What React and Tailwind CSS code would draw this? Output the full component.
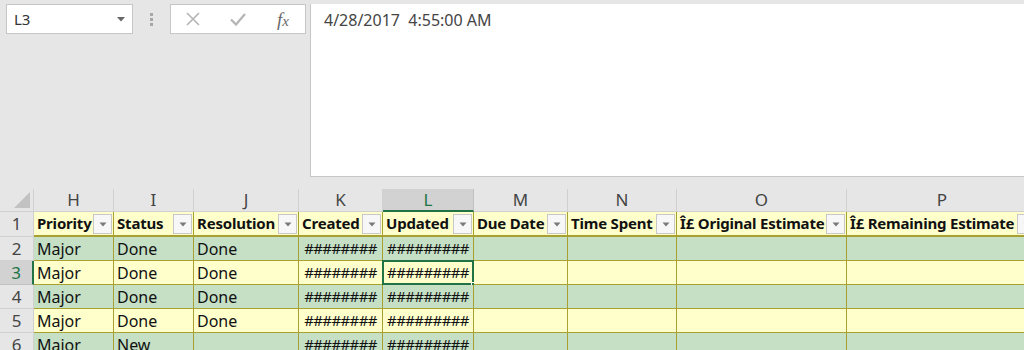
import React from "react";

const cols = [
  { l: "H", h: "Priority" },
  { l: "I", h: "Status" },
  { l: "J", h: "Resolution" },
  { l: "K", h: "Created" },
  { l: "L", h: "Updated" },
  { l: "M", h: "Due Date" },
  { l: "N", h: "Time Spent" },
  { l: "O", h: "Î£ Original Estimate" },
  { l: "P", h: "Î£ Remaining Estimate" },
];

const rows = [
  ["Major", "Done", "Done", "########", "#########", "", "", "", ""],
  ["Major", "Done", "Done", "########", "#########", "", "", "", ""],
  ["Major", "Done", "Done", "########", "#########", "", "", "", ""],
  ["Major", "Done", "Done", "########", "#########", "", "", "", ""],
  ["Major", "New", "", "########", "#########", "", "", "", ""],
];

function Drop() {
  return (
    <div className="absolute right-[1px] top-[2px] w-[19px] h-[20px] bg-[#f7f7f7] border border-[#c8c8c8] flex items-center justify-center">
      <svg width="8" height="5" viewBox="0 0 8 5">
        <path d="M0.5 0.5 L7.5 0.5 L4 4.5 Z" fill="#7a7a7a" />
      </svg>
    </div>
  );
}

const font = { fontFamily: '"Noto Sans", "Open Sans", sans-serif' };

export default function App() {
  return (
    <div className="w-[1024px] h-[350px] bg-[#e6e6e6] overflow-hidden flex flex-col" style={font}>
      {/* formula bar */}
      <div className="flex items-start pt-[4px] h-[189px] shrink-0">
        <div className="ml-[6px] w-[127px] h-[30px] bg-white border border-[#c6c6c6] flex items-center justify-between pl-[7px] pr-[7px]">
          <span className="text-[15px] text-[#333]">L3</span>
          <svg width="8" height="5" viewBox="0 0 8 5">
            <path d="M0 0 L8 0 L4 4.5 Z" fill="#666" />
          </svg>
        </div>
        <div className="w-[37px] h-[30px] flex flex-col items-center justify-center gap-[2px]">
          <div className="w-[3px] h-[3px] bg-[#a6a6a6]" />
          <div className="w-[3px] h-[3px] bg-[#a6a6a6]" />
          <div className="w-[3px] h-[3px] bg-[#a6a6a6]" />
        </div>
        <div className="w-[136px] h-[30px] bg-white border border-[#c6c6c6] flex items-center">
          <div className="w-[44px] flex justify-center">
            <svg width="14" height="14" viewBox="0 0 14 14">
              <path d="M1 1 L13 13 M13 1 L1 13" stroke="#b4b4b4" strokeWidth="1.6" />
            </svg>
          </div>
          <div className="w-[46px] flex justify-center">
            <svg width="16" height="13" viewBox="0 0 16 13">
              <path d="M1 6.5 L6 11.5 L15 1" stroke="#b4b4b4" strokeWidth="2.2" fill="none" />
            </svg>
          </div>
          <div className="w-[44px] flex justify-center">
            <span className="text-[19px] italic text-[#6a6a6a] leading-none" style={{ fontFamily: '"Liberation Serif", serif' }}>
              f<span className="text-[15px]">x</span>
            </span>
          </div>
        </div>
        <div className="ml-[4px] flex-1 h-[173px] bg-white border-l border-b border-[#c6c6c6] pl-[13px] pt-[4px]">
          <span className="text-[16px] text-[#444] whitespace-pre">4/28/2017  4:55:00 AM</span>
        </div>
      </div>

      {/* grid */}
      <div className="grid grid-cols-[34px_80px_80px_105px_84px_91px_94px_109px_170px_191px] grid-rows-[23px_25px_24px_24px_24px_24px_24px]">
        {/* column header row */}
        <div className="relative bg-[#e6e6e6] border-r border-b border-[#d0d0d0]">
          <svg className="absolute right-[3px] bottom-[3px]" width="16" height="16" viewBox="0 0 16 16">
            <path d="M16 0 L16 16 L0 16 Z" fill="#c2c2c2" />
          </svg>
        </div>
        {cols.map((c) => (
          <div
            key={c.l}
            className={
              c.l === "L"
                ? "bg-[#d2d2d2] border-r border-[#c0c0c0] border-b-2 border-b-[#217346] flex items-center justify-center text-[17px] text-[#217346]"
                : "bg-[#e6e6e6] border-r border-b border-[#d0d0d0] flex items-center justify-center text-[17px] text-[#444]"
            }
          >
            {c.l}
          </div>
        ))}

        {/* header row 1 */}
        <div className="bg-[#e6e6e6] border-r border-b border-[#d0d0d0] flex items-center justify-center text-[17px] text-[#444]">1</div>
        {cols.map((c) => (
          <div
            key={"h" + c.l}
            className="relative bg-[#ffffcc] border-r border-b-2 border-[#a8a030] pl-[3px] flex items-center overflow-hidden whitespace-nowrap text-[15px] tracking-[-0.2px] font-bold text-[#111]"
          >
            {c.h}
            <Drop />
          </div>
        ))}

        {rows.map((r, i) => {
          const n = i + 2;
          const sel = n === 3;
          const bg = i % 2 === 0 ? "bg-[#c5e0c4]" : "bg-[#ffffcc]";
          return (
            <React.Fragment key={n}>
              <div
                className={
                  sel
                    ? "bg-[#d2d2d2] border-r-2 border-r-[#217346] border-b border-[#c0c0c0] flex items-center justify-center text-[17px] text-[#217346]"
                    : "bg-[#e6e6e6] border-r border-b border-[#d0d0d0] flex items-center justify-center text-[17px] text-[#444]"
                }
              >
                {n}
              </div>
              {r.map((v, j) => {
                const isSel = sel && j === 4;
                const hash = j === 3 || j === 4;
                return (
                  <div
                    key={j}
                    className={
                      "relative " +
                      bg +
                      " border-r border-b border-[#a8a030] flex items-center whitespace-nowrap overflow-visible text-[#111] " +
                      (hash ? "justify-center tracking-[-0.6px] text-[15px]" : "pl-[3px] text-[16px]")
                    }
                  >
                    {v}
                    {isSel && (
                      <>
                        <div className="absolute -left-[1px] -top-[1px] right-[-1px] bottom-[-1px] border-2 border-[#217346] pointer-events-none" />
                        <div className="absolute right-[-4px] bottom-[-4px] w-[6px] h-[6px] bg-[#217346] border border-white" />
                      </>
                    )}
                  </div>
                );
              })}
            </React.Fragment>
          );
        })}
      </div>
    </div>
  );
}
